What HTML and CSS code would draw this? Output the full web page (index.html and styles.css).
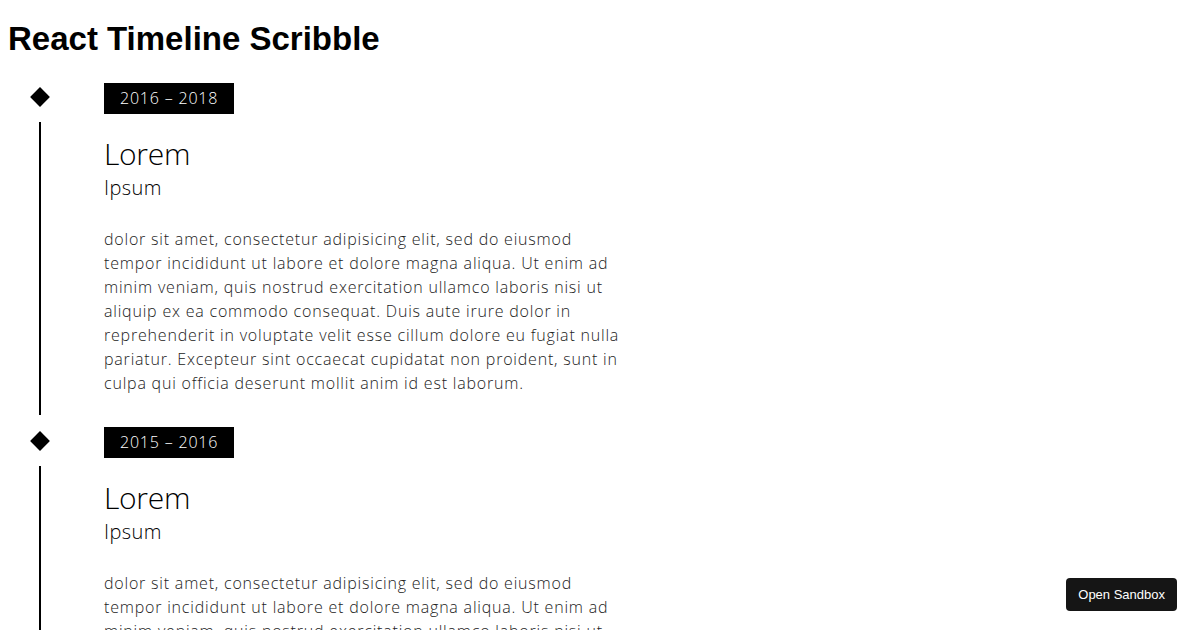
FILE: index.html
```html
<!DOCTYPE html>
<html lang="en">
<head>
    <meta charset="UTF-8">
    <title>React Timeline Scribble</title>
    <link rel="stylesheet" href="styles.css">
</head>
<body>
    <h1>React Timeline Scribble</h1>

    <div class="timeline">
        <div class="event">
            <div class="marker">
                <div class="diamond"></div>
                <div class="line"></div>
            </div>
            <div class="content">
                <span class="interval">2016 – 2018</span>
                <div class="title">Lorem</div>
                <div class="subtitle">Ipsum</div>
                <p class="text">dolor sit amet, consectetur adipisicing elit, sed do eiusmod tempor incididunt ut labore et dolore magna aliqua. Ut enim ad minim veniam, quis nostrud exercitation ullamco laboris nisi ut aliquip ex ea commodo consequat. Duis aute irure dolor in reprehenderit in voluptate velit esse cillum dolore eu fugiat nulla pariatur. Excepteur sint occaecat cupidatat non proident, sunt in culpa qui officia deserunt mollit anim id est laborum.</p>
            </div>
        </div>

        <div class="event">
            <div class="marker">
                <div class="diamond"></div>
                <div class="line"></div>
            </div>
            <div class="content">
                <span class="interval">2015 – 2016</span>
                <div class="title">Lorem</div>
                <div class="subtitle">Ipsum</div>
                <p class="text">dolor sit amet, consectetur adipisicing elit, sed do eiusmod tempor incididunt ut labore et dolore magna aliqua. Ut enim ad minim veniam, quis nostrud exercitation ullamco laboris nisi ut aliquip ex ea commodo consequat. Duis aute irure dolor in reprehenderit in voluptate velit esse cillum dolore eu fugiat nulla pariatur. Excepteur sint occaecat cupidatat non proident, sunt in culpa qui officia deserunt mollit anim id est laborum.</p>
            </div>
        </div>
    </div>

    <a class="sandbox-btn" href="#">Open Sandbox</a>
</body>
</html>
```

FILE: styles.css
```css
html, body { height: 100%; }
body {
    margin: 8px;
    font-family: 'Open Sans', sans-serif;
    background: #fff;
    color: #000;
    overflow: hidden;
}
h1 {
    font-family: 'Liberation Sans', Arial, sans-serif;
    font-size: 33px;
    font-weight: bold;
    margin: 12px 0 25px;
}
.timeline { display: flex; flex-direction: column; gap: 12px; }
.event {
    display: grid;
    grid-template-columns: 64px 1fr;
    column-gap: 32px;
}
.marker { display: flex; flex-direction: column; align-items: center; }
.diamond {
    width: 14px;
    height: 14px;
    margin-top: 7px;
    background: #000;
    transform: rotate(45deg);
}
.line { width: 2px; flex: 1; margin-top: 18px; background: #000; }
.content { width: 520px; padding-bottom: 20px; }
.interval {
    display: inline-block;
    background: #000;
    color: #fff;
    font-size: 16px;
    font-weight: 300;
    line-height: 23px;
    letter-spacing: 0.8px;
    padding: 4px 16px;
}
.title { font-size: 30px; font-weight: 300; line-height: 40px; letter-spacing: -0.3px; margin-top: 20px; }
.subtitle { font-size: 20px; font-weight: 300; line-height: 28px; letter-spacing: 0.4px; }
.text {
    margin: 25px 0 0;
    font-size: 16px;
    font-weight: 300;
    line-height: 24px;
    letter-spacing: 0.8px;
    color: #222;
}
.sandbox-btn {
    position: fixed;
    right: 23px;
    bottom: 19px;
    background: #151515;
    color: #fff;
    font-family: 'Liberation Sans', Arial, sans-serif;
    font-size: 13px;
    line-height: 17px;
    padding: 8px 12px;
    border-radius: 4px;
    text-decoration: none;
}
```
